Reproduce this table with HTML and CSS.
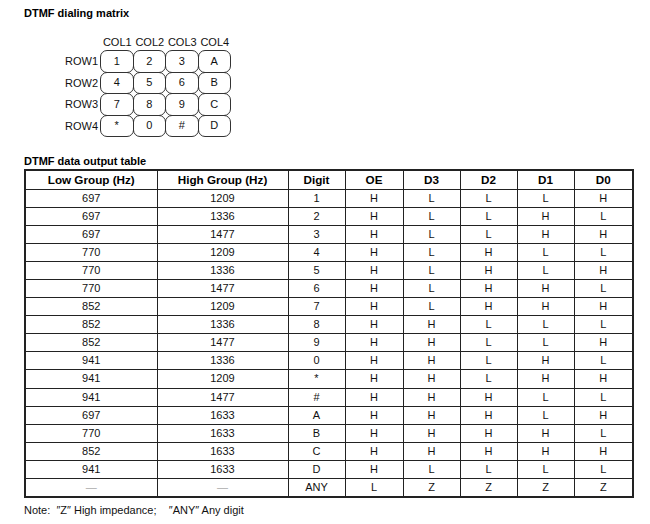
FILE: index.html
```html
<!DOCTYPE html>
<html>
<head>
<meta charset="utf-8">
<link rel="stylesheet" href="styles.css">
</head>
<body>
<div class="page">
  <div class="title">DTMF dialing matrix</div>
  <div class="matrix">
    <div class="corner"></div>
    <div class="col-label">COL1</div>
    <div class="col-label">COL2</div>
    <div class="col-label">COL3</div>
    <div class="col-label">COL4</div>

    <div class="row-label">ROW1</div>
    <div class="key">1</div><div class="key">2</div><div class="key">3</div><div class="key">A</div>
    <div class="row-label">ROW2</div>
    <div class="key">4</div><div class="key">5</div><div class="key">6</div><div class="key">B</div>
    <div class="row-label">ROW3</div>
    <div class="key">7</div><div class="key">8</div><div class="key">9</div><div class="key">C</div>
    <div class="row-label">ROW4</div>
    <div class="key">*</div><div class="key">0</div><div class="key">#</div><div class="key">D</div>
  </div>

  <div class="title title-table">DTMF data output table</div>
  <table class="dtmf">
    <colgroup>
      <col class="c-low"><col class="c-high"><col class="c-digit"><col class="c-oe">
      <col class="c-bit"><col class="c-bit"><col class="c-bit"><col class="c-last">
    </colgroup>
    <thead>
      <tr><th>Low Group (Hz)</th><th>High Group (Hz)</th><th>Digit</th><th>OE</th><th>D3</th><th>D2</th><th>D1</th><th>D0</th></tr>
    </thead>
    <tbody>
      <tr><td>697</td><td>1209</td><td>1</td><td>H</td><td>L</td><td>L</td><td>L</td><td>H</td></tr>
      <tr><td>697</td><td>1336</td><td>2</td><td>H</td><td>L</td><td>L</td><td>H</td><td>L</td></tr>
      <tr><td>697</td><td>1477</td><td>3</td><td>H</td><td>L</td><td>L</td><td>H</td><td>H</td></tr>
      <tr><td>770</td><td>1209</td><td>4</td><td>H</td><td>L</td><td>H</td><td>L</td><td>L</td></tr>
      <tr><td>770</td><td>1336</td><td>5</td><td>H</td><td>L</td><td>H</td><td>L</td><td>H</td></tr>
      <tr><td>770</td><td>1477</td><td>6</td><td>H</td><td>L</td><td>H</td><td>H</td><td>L</td></tr>
      <tr><td>852</td><td>1209</td><td>7</td><td>H</td><td>L</td><td>H</td><td>H</td><td>H</td></tr>
      <tr><td>852</td><td>1336</td><td>8</td><td>H</td><td>H</td><td>L</td><td>L</td><td>L</td></tr>
      <tr><td>852</td><td>1477</td><td>9</td><td>H</td><td>H</td><td>L</td><td>L</td><td>H</td></tr>
      <tr><td>941</td><td>1336</td><td>0</td><td>H</td><td>H</td><td>L</td><td>H</td><td>L</td></tr>
      <tr><td>941</td><td>1209</td><td>*</td><td>H</td><td>H</td><td>L</td><td>H</td><td>H</td></tr>
      <tr><td>941</td><td>1477</td><td>#</td><td>H</td><td>H</td><td>H</td><td>L</td><td>L</td></tr>
      <tr><td>697</td><td>1633</td><td>A</td><td>H</td><td>H</td><td>H</td><td>L</td><td>H</td></tr>
      <tr><td>770</td><td>1633</td><td>B</td><td>H</td><td>H</td><td>H</td><td>H</td><td>L</td></tr>
      <tr><td>852</td><td>1633</td><td>C</td><td>H</td><td>H</td><td>H</td><td>H</td><td>H</td></tr>
      <tr><td>941</td><td>1633</td><td>D</td><td>H</td><td>L</td><td>L</td><td>L</td><td>L</td></tr>
      <tr><td class="dash">—</td><td class="dash">—</td><td>ANY</td><td>L</td><td>Z</td><td>Z</td><td>Z</td><td>Z</td></tr>
    </tbody>
  </table>
  <div class="note">Note:  ″Z″ High impedance;    ″ANY″ Any digit</div>
</div>
</body>
</html>
```

FILE: styles.css
```css
html, body {
  margin: 0;
  padding: 0;
  background: #fff;
}

body {
  font-family: "Liberation Sans", Arial, sans-serif;
  font-size: 11px;
  color: #111;
}

.page {
  padding: 7px 0 0 24px;
}

.title {
  font-weight: bold;
  font-size: 11px;
  line-height: 13px;
  color: #000;
}

.matrix {
  display: grid;
  grid-template-columns: 35px repeat(4, 32.5px);
  grid-template-rows: 16px repeat(4, 21.5px);
  margin: 14px 0 0 41px;
  width: max-content;
}

.col-label {
  text-align: center;
  line-height: 16px;
  padding-left: 2px;
}

.row-label {
  text-align: right;
  padding-right: 3px;
  line-height: 22px;
}

.key {
  border: 1px solid #333;
  border-radius: 7px;
  margin-right: -1px;
  margin-bottom: -1px;
  display: flex;
  align-items: center;
  justify-content: center;
  line-height: 1;
}

.title-table {
  margin-top: 19px;
}

.dtmf {
  border-collapse: collapse;
  border: 2px solid #222;
  margin-top: 1px;
  table-layout: fixed;
  width: 609px;
}

.c-low { width: 132px; }
.c-high { width: 131px; }
.c-digit { width: 57px; }
.c-oe { width: 58px; }
.c-bit { width: 57px; }
.c-last { width: 59px; }

.dtmf th,
.dtmf td {
  border: 1px solid #222;
  padding: 0;
  text-align: center;
  line-height: 13px;
}

.dtmf thead tr { height: 19px; }
.dtmf tbody tr { height: 18.1px; }

.dtmf th {
  font-weight: bold;
  font-size: 11.7px;
  color: #000;
}

.dtmf td.dash {
  color: #aaa;
}

.note {
  margin-top: 6px;
  white-space: pre;
  line-height: 13px;
}
```
